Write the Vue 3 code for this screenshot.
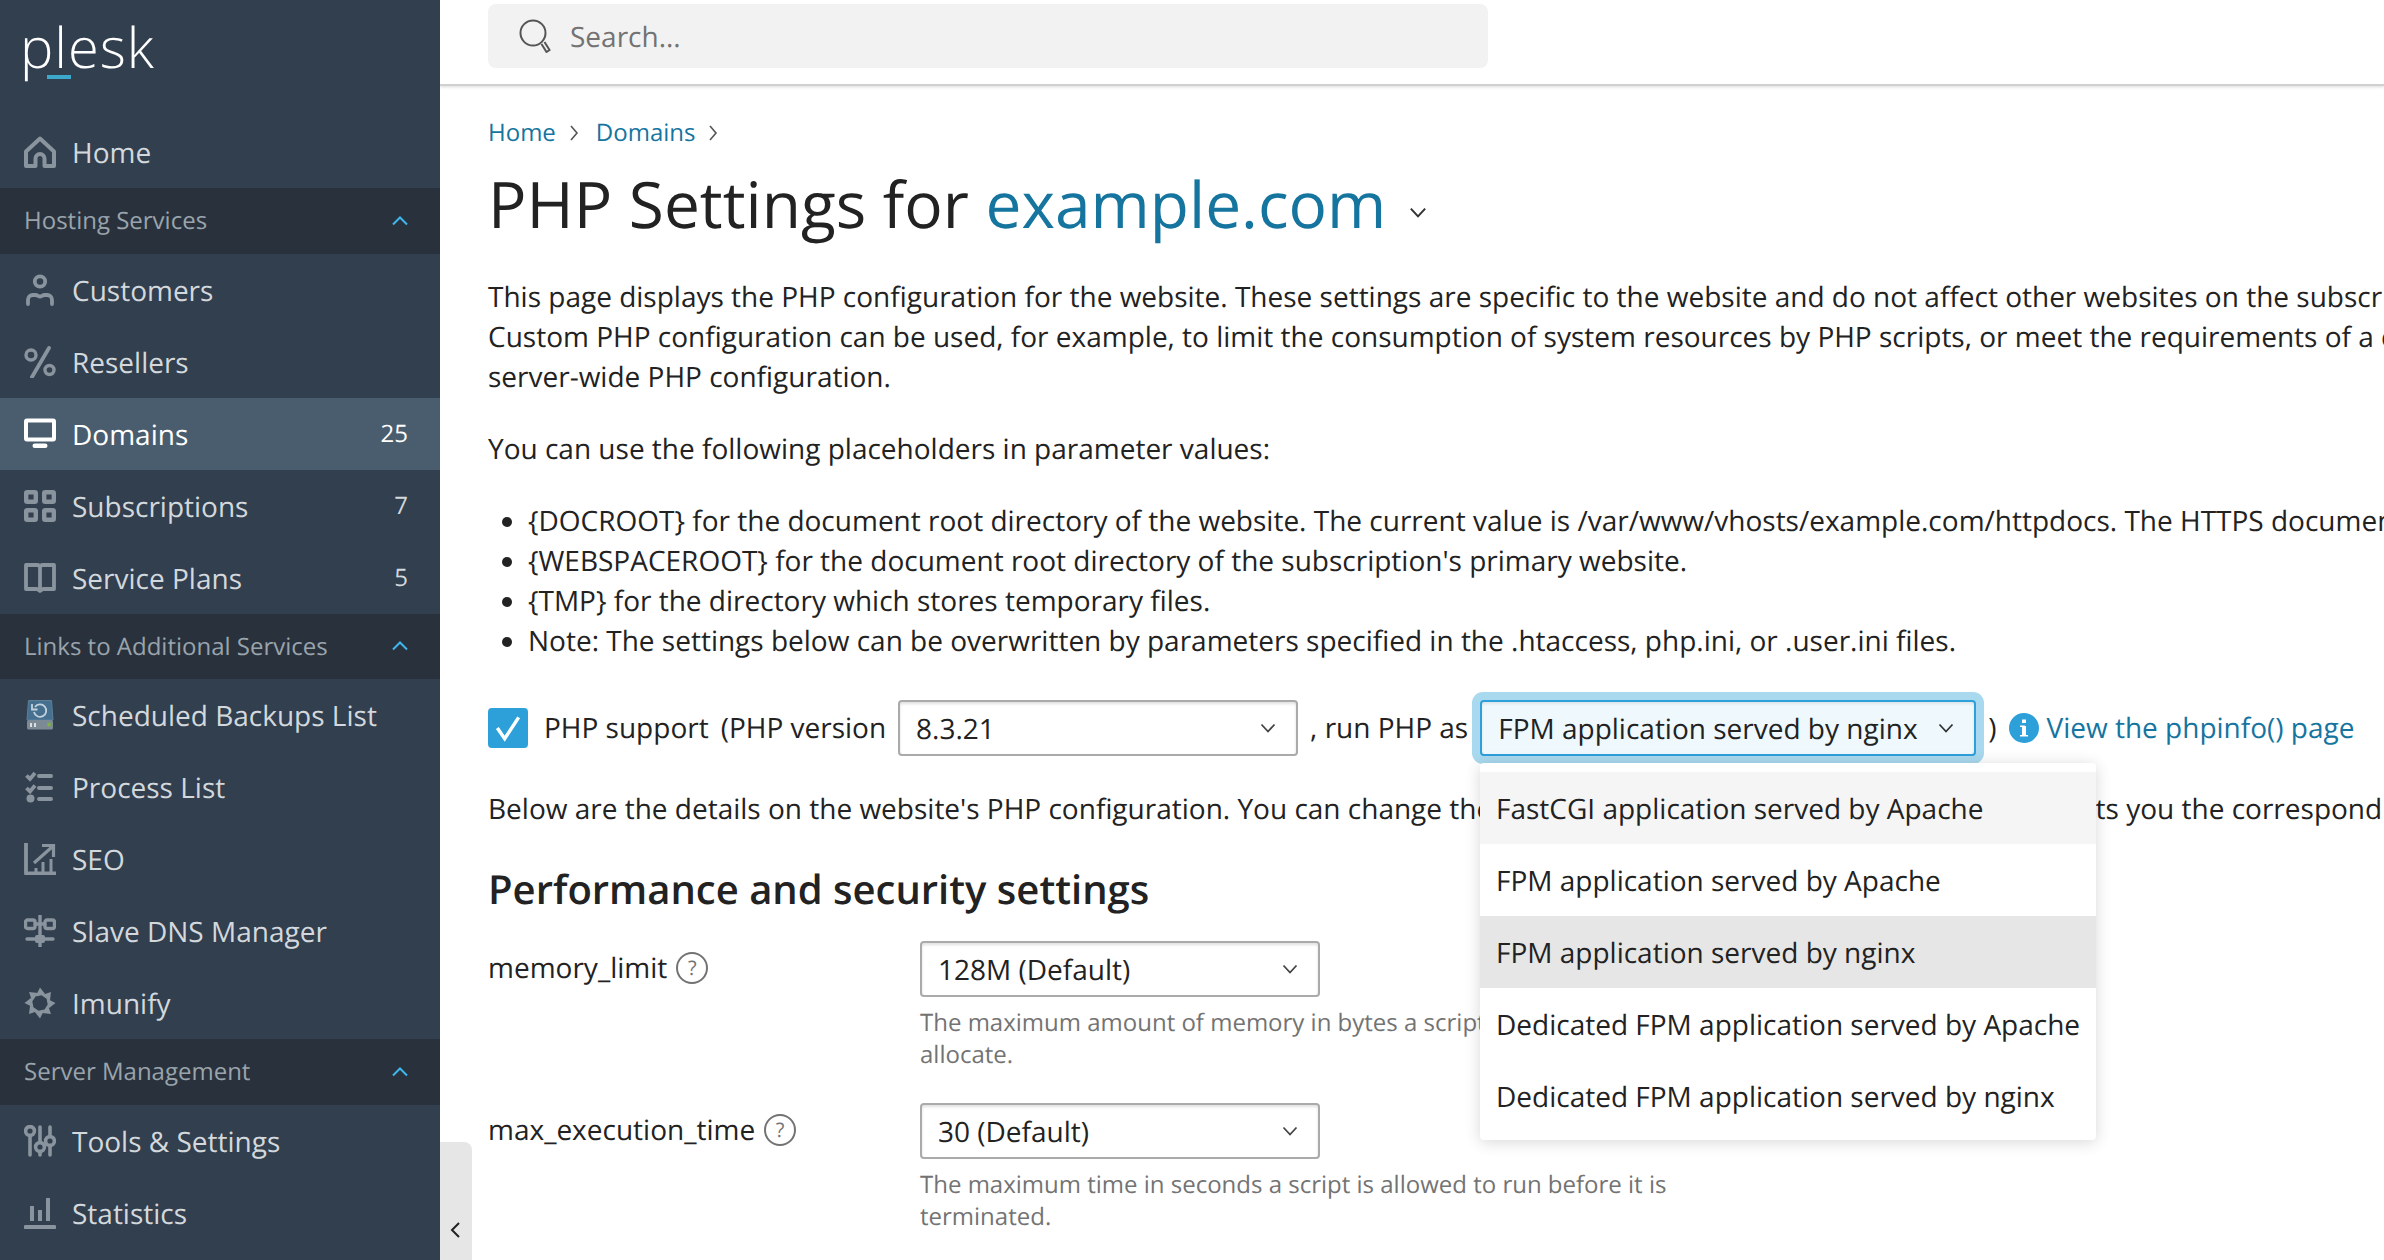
<script setup>
const blades = [0, 45, 90, 135, 180, 225, 270, 315]
  .map((deg) => `<path transform="rotate(${deg} 16 16)" d="M16 .5 21.500 7.500 11.500 9.500Z"/>`)
  .join('')

const icons = {
  home: '<path d="M16 2.500 30 15.500V30H20.500V22.500a4.500 4.500 0 0 0-9 0V30H2V15.500Z" fill="none" stroke="currentColor" stroke-width="4" stroke-linejoin="round"/>',
  user: '<circle cx="16" cy="7.500" r="5.200" fill="none" stroke="currentColor" stroke-width="3.800"/><path d="M4 30v-4c0-3 2-5 5-5h2.500c2 0 3 1.500 4.500 1.500S18.500 21 20.500 21H23c3 0 5 2 5 5v4" fill="none" stroke="currentColor" stroke-width="3.800" stroke-linecap="round"/>',
  percent: '<circle cx="7" cy="9" r="5" fill="none" stroke="currentColor" stroke-width="3.400"/><circle cx="25.500" cy="24" r="4.500" fill="none" stroke="currentColor" stroke-width="3.400"/><path d="M25 2 8 31" stroke="currentColor" stroke-width="3.800" stroke-linecap="round"/>',
  monitor: '<rect x="2" y="2.500" width="28" height="19" rx="1" fill="none" stroke="currentColor" stroke-width="4"/><rect x="8.500" y="25.500" width="15" height="4.500" rx="2.200" fill="currentColor"/>',
  grid: '<g fill="none" stroke="currentColor" stroke-width="4.400"><rect x="2.200" y="2.200" width="9.600" height="9.600" rx="1"/><rect x="20.200" y="2.200" width="9.600" height="9.600" rx="1"/><rect x="2.200" y="20.200" width="9.600" height="9.600" rx="1"/><rect x="20.200" y="20.200" width="9.600" height="9.600" rx="1"/></g>',
  book: '<path d="M2 3h11c1.500 0 3 1 3 1s1.500-1 3-1h11v24H19l-3 2-3-2H2Z" fill="none" stroke="currentColor" stroke-width="3.800" stroke-linejoin="round"/><path d="M16 4v25" stroke="currentColor" stroke-width="3.800"/>',
  backup: '<path d="M4.500 1.500h23L29 21H3Z" fill="#46708f" stroke="#5d7f98"/><rect x="3" y="21" width="26" height="9.500" rx="1.500" fill="#7c8a95"/><path d="M10 13a6.200 6.200 0 1 0 1-5" fill="none" stroke="#c3d3de" stroke-width="1.800"/><path d="M8 5v5.500h5.500" fill="none" stroke="#c3d3de" stroke-width="1.800"/><rect x="6" y="24" width="2" height="4" fill="#ddd"/><rect x="10" y="24" width="2" height="4" fill="#ddd"/><circle cx="25" cy="25.500" r="2" fill="#7cb342"/>',
  tasks: '<path d="M2.500 4.500 6 8l5-6M2.500 17 6 20.500l5-6" fill="none" stroke="currentColor" stroke-width="3.800"/><circle cx="6.500" cy="27.500" r="4" fill="currentColor"/><path d="M15 5h12M15 17h12M15 28h12" stroke="currentColor" stroke-width="4" stroke-linecap="round"/>',
  seo: '<path d="M2 0v30.500h30" fill="none" stroke="currentColor" stroke-width="3.800" stroke-linejoin="round"/><path d="M10 20 28 4M18 2.500h11.500V14" fill="none" stroke="currentColor" stroke-width="3.200"/><path d="M12 30v-5M19 30V19M27 30V16" stroke="currentColor" stroke-width="3"/>',
  dns: '<path d="M16 0v32M0 9h32M3 24h26" stroke="currentColor" stroke-width="3.400" stroke-linecap="round"/><rect x="1.500" y="5" width="9.500" height="8.500" rx="2" fill="#323f4f" stroke="currentColor" stroke-width="3.400"/><rect x="21" y="5" width="9.500" height="8.500" rx="2" fill="#323f4f" stroke="currentColor" stroke-width="3.400"/><rect x="11" y="20" width="10" height="8" rx="2" fill="currentColor"/>',
  imunify: `<g fill="currentColor">${blades}</g>`,
  sliders: '<g fill="none" stroke="currentColor" stroke-width="3.600" stroke-linecap="round"><path d="M6 11v19M16 2v14M16 28v2M26 2v8M26 22v8"/><circle cx="6" cy="6" r="4.400"/><circle cx="16" cy="22" r="4.400"/><circle cx="26" cy="16" r="4.400"/></g>',
  stats: '<path d="M8 9v15M16 13v11M24 1v23" stroke="currentColor" stroke-width="4"/><path d="M1.500 30h29" stroke="currentColor" stroke-width="4" stroke-linecap="round"/>',
}

const nav = [
  { type: 'item', label: 'Home', icon: 'home' },
  { type: 'section', label: 'Hosting Services' },
  { type: 'item', label: 'Customers', icon: 'user' },
  { type: 'item', label: 'Resellers', icon: 'percent' },
  { type: 'item', label: 'Domains', icon: 'monitor', count: 25, active: true },
  { type: 'item', label: 'Subscriptions', icon: 'grid', count: 7 },
  { type: 'item', label: 'Service Plans', icon: 'book', count: 5 },
  { type: 'section', label: 'Links to Additional Services' },
  { type: 'item', label: 'Scheduled Backups List', icon: 'backup' },
  { type: 'item', label: 'Process List', icon: 'tasks' },
  { type: 'item', label: 'SEO', icon: 'seo' },
  { type: 'item', label: 'Slave DNS Manager', icon: 'dns' },
  { type: 'item', label: 'Imunify', icon: 'imunify' },
  { type: 'section', label: 'Server Management' },
  { type: 'item', label: 'Tools & Settings', icon: 'sliders' },
  { type: 'item', label: 'Statistics', icon: 'stats' },
]

const placeholders = [
  '{DOCROOT} for the document root directory of the website. The current value is /var/www/vhosts/example.com/httpdocs. The HTTPS document root is the same.',
  "{WEBSPACEROOT} for the document root directory of the subscription's primary website.",
  '{TMP} for the directory which stores temporary files.',
  'Note: The settings below can be overwritten by parameters specified in the .htaccess, php.ini, or .user.ini files.',
]

const handlers = [
  { label: 'FastCGI application served by Apache', cls: 'hover' },
  { label: 'FPM application served by Apache' },
  { label: 'FPM application served by nginx', cls: 'selected' },
  { label: 'Dedicated FPM application served by Apache' },
  { label: 'Dedicated FPM application served by nginx' },
]

const settings = [
  { name: 'memory_limit', value: '128M (Default)', hint: 'The maximum amount of memory in bytes a script is allowed to allocate.' },
  { name: 'max_execution_time', value: '30 (Default)', hint: 'The maximum time in seconds a script is allowed to run before it is terminated.' },
]
</script>

<template>
  <div class="app">
    <aside class="sidebar">
      <div class="logo">plesk<span class="logo-bar"></span></div>
      <nav class="nav">
        <template v-for="entry in nav" :key="entry.label">
          <div v-if="entry.type === 'section'" class="section">
            <span class="section-label">{{ entry.label }}</span>
            <svg class="section-chev" viewBox="0 0 16 10"><path d="M1 8.500 8 1.500l7 7" fill="none" stroke="currentColor" stroke-width="2"/></svg>
          </div>
          <div v-else class="item" :class="{ active: entry.active }">
            <svg class="nav-icon" viewBox="0 0 32 32" v-html="icons[entry.icon]"></svg>
            <span class="item-label">{{ entry.label }}</span>
            <span v-if="entry.count" class="count">{{ entry.count }}</span>
          </div>
        </template>
      </nav>
    </aside>

    <main class="main">
      <header class="topbar">
        <div class="search">
          <svg class="search-icon" viewBox="0 0 34 34"><circle cx="14" cy="14" r="12.500" fill="none" stroke="#555" stroke-width="2"/><path d="m22.500 25 5 8 3-2-5-8" fill="none" stroke="#555" stroke-width="2"/></svg>
          <span class="search-text">Search...</span>
        </div>
      </header>

      <div class="collapse">
        <svg class="collapse-chev" viewBox="0 0 12 18"><path d="M10 2 3 9l7 7" fill="none" stroke="#222" stroke-width="2"/></svg>
      </div>

      <section class="content">
        <div class="crumbs">
          <a>Home</a>
          <svg class="crumb-sep" viewBox="0 0 10 18"><path d="m2 2 6 7-6 7" fill="none" stroke="#555" stroke-width="1.600"/></svg>
          <a>Domains</a>
          <svg class="crumb-sep" viewBox="0 0 10 18"><path d="m2 2 6 7-6 7" fill="none" stroke="#555" stroke-width="1.600"/></svg>
        </div>

        <h1 class="title">
          PHP Settings for <a>example.com</a>
          <svg class="title-chev" viewBox="0 0 16 10"><path d="m1.500 1.500 6.500 7 6.500-7" fill="none" stroke="#333" stroke-width="1.800"/></svg>
        </h1>

        <p class="para">
          This page displays the PHP configuration for the website. These settings are specific to the website and do not affect other websites on the subscription.<br>
          Custom PHP configuration can be used, for example, to limit the consumption of system resources by PHP scripts, or meet the requirements of a certain application. The settings override the<br>
          server-wide PHP configuration.
        </p>
        <p class="para">You can use the following placeholders in parameter values:</p>
        <ul class="list">
          <li v-for="line in placeholders" :key="line">{{ line }}</li>
        </ul>

        <div class="support-row">
          <span class="checkbox">
            <svg viewBox="0 0 24 24"><path d="M4 12 9.500 20 20 4" fill="none" stroke="#fff" stroke-width="2.600"/></svg>
          </span>
          <span class="support-label">PHP support</span>
          <span class="version-label">(PHP version</span>
          <div class="select version-select">
            <span class="select-text">8.3.21</span>
            <svg class="chev" viewBox="0 0 16 10"><path d="m1.500 1.500 6.500 7 6.500-7" fill="none" stroke="#444" stroke-width="1.800"/></svg>
          </div>
          <span class="run-label">, run PHP as</span>
          <div class="select handler-select">
            <span class="select-text">FPM application served by nginx</span>
            <svg class="chev" viewBox="0 0 16 10"><path d="m1.500 1.500 6.500 7 6.500-7" fill="none" stroke="#333" stroke-width="1.800"/></svg>
          </div>
          <span class="paren">)</span>
          <svg class="info" viewBox="0 0 30 30"><circle cx="15" cy="15" r="15" fill="#2d9fd9"/><path d="M13 6.500h4v3.500h-4zM13 13h4v10h-4z" fill="#fff"/><path d="M11 12.500h5v1.500h-5zM11 22h8v1.500h-8z" fill="#fff"/></svg>
          <a class="phpinfo">View the phpinfo() page</a>

          <div class="menu">
            <div v-for="opt in handlers" :key="opt.label" class="menu-item" :class="opt.cls">{{ opt.label }}</div>
          </div>
        </div>

        <p class="below">Below are the details on the website's PHP configuration. You can change them if the hosting plan of your subscription grants you the corresponding permissions.</p>

        <h2 class="subtitle">Performance and security settings</h2>

        <div v-for="s in settings" :key="s.name" class="setting">
          <div class="setting-label">
            <span>{{ s.name }}</span>
            <span class="help">?</span>
          </div>
          <div class="setting-field">
            <div class="select value-select">
              <span class="select-text">{{ s.value }}</span>
              <svg class="chev" viewBox="0 0 16 10"><path d="m1.500 1.500 6.500 7 6.500-7" fill="none" stroke="#444" stroke-width="1.800"/></svg>
            </div>
            <div class="hint">{{ s.hint }}</div>
          </div>
        </div>
      </section>
    </main>
  </div>
</template>

<style>
html, body { margin: 0; height: 100%; overflow: hidden; background: #fff; }
</style>

<style scoped>
.app {
  display: flex;
  width: 2384px;
  height: 1260px;
  overflow: hidden;
  font-family: "Open Sans", "Noto Sans", sans-serif;
  font-size: 28px;
  line-height: 40px;
  color: #222;
  text-rendering: geometricPrecision;
}
a { color: #15759f; }

.sidebar { flex: 0 0 440px; background: #323f4f; overflow: hidden; }
.logo {
  position: relative;
  height: 116px;
  box-sizing: border-box;
  padding: 14px 0 0 20px;
  font-size: 56px;
  line-height: 66px;
  font-weight: 300;
  color: #fff;
  letter-spacing: 1px;
}
.logo-bar { position: absolute; left: 47px; top: 75px; width: 24px; height: 4px; background: #3ba8cc; }
.section {
  height: 65.6px;
  display: flex;
  align-items: center;
  justify-content: space-between;
  padding: 0 32px 0 24px;
  background: #29323c;
  color: #9aa4ac;
  font-size: 24px;
}
.section-label { padding-top: 1px; }
.section-chev { width: 16px; height: 10px; color: #3fb6ee; }
.item {
  height: 72px;
  display: flex;
  align-items: center;
  padding: 0 32px 0 24px;
  color: #d3d8dc;
}
.item.active { background: #4a5d6e; color: #fff; }
.nav-icon { flex: 0 0 32px; width: 32px; height: 32px; margin-right: 16px; color: #8a949e; }
.item.active .nav-icon { color: #fff; }
.item-label { flex: 1; padding-top: 2px; }
.count { font-size: 24px; }

.main { flex: 1; position: relative; min-width: 0; overflow: hidden; }
.topbar {
  height: 86px;
  box-sizing: border-box;
  padding: 4px 48px 0;
  border-bottom: 2px solid #d0d0d0;
  box-shadow: 0 1px 3px rgba(0,0,0,.15);
}
.search {
  width: 1000px;
  height: 64px;
  box-sizing: border-box;
  display: flex;
  align-items: center;
  padding-left: 31px;
  background: #f2f2f2;
  border-radius: 8px;
  color: #737373;
}
.search-icon { width: 34px; height: 34px; margin-right: 17px; }
.search-text { padding-top: 2px; }
.collapse {
  position: absolute;
  left: 0;
  top: 1142px;
  width: 32px;
  height: 118px;
  background: #e6e6e6;
  border-top-right-radius: 8px;
}
.collapse-chev { position: absolute; left: 9px; top: 79px; width: 12px; height: 18px; }

.content { padding: 31px 48px 0; }
.crumbs { display: flex; align-items: center; height: 32px; font-size: 24px; line-height: 32px; }
.crumb-sep { width: 10px; height: 18px; margin: 0 17px 0 13px; }
.title { margin: 15px 0 0; font-size: 64px; line-height: 80px; font-weight: 400; white-space: nowrap; }
.title-chev { width: 18px; height: 11px; margin-left: 23px; vertical-align: 10px; }
.para { margin: 0 0 32px; white-space: nowrap; }
.title + .para { margin-top: 33px; }
.list { margin: 0 0 39px; padding: 0 0 0 40px; white-space: nowrap; }
.support-row { position: relative; display: flex; align-items: center; height: 56px; white-space: nowrap; }
.support-row > * { flex: none; }
.checkbox {
  width: 40px;
  height: 40px;
  margin-right: 16px;
  background: #2d9fd9;
  border-radius: 4px;
  display: flex;
  align-items: center;
  justify-content: center;
}
.checkbox svg { width: 32px; height: 32px; }
.support-label { margin-right: 12px; }
.version-label { margin-right: 12px; }
.select {
  box-sizing: border-box;
  height: 56px;
  display: flex;
  align-items: center;
  justify-content: space-between;
  padding: 0 20px 0 16px;
  border: 2px solid #aaa;
  border-radius: 4px;
  background: #fff;
  box-shadow: inset 0 2px 3px rgba(0,0,0,.12);
}
.select-text { padding-top: 2px; }
.chev { flex: 0 0 16px; width: 16px; height: 10px; }
.version-select { width: 400px; }
.run-label { margin: 0 12px 0 12px; }
.handler-select {
  width: 496px;
  border-color: #2d9fd9;
  background: #eef8fd;
  box-shadow: 0 0 0 8px #a9d9ef, inset 0 2px 3px rgba(0,0,0,.08);
}
.paren { margin-left: 12px; }
.info { width: 30px; height: 30px; margin: 0 7px 0 13px; }

.menu {
  position: absolute;
  left: 992px;
  top: 63px;
  width: 616px;
  box-sizing: border-box;
  padding: 9px 0 8px;
  background: #fff;
  border-radius: 4px;
  box-shadow: 0 2px 16px rgba(0,0,0,.16);
  z-index: 2;
}
.menu-item { height: 72px; box-sizing: border-box; padding: 2px 16px 0; display: flex; align-items: center; }
.menu-item.hover { background: #f5f5f5; }
.menu-item.selected { background: #e6e6e6; }

.below { margin: 33px 0 0; white-space: nowrap; }
.subtitle { margin: 32px 0 24px; font-size: 40px; line-height: 56px; font-weight: 600; }
.setting { display: flex; margin-bottom: 32px; }
.setting-label { flex: 0 0 432px; display: flex; align-items: flex-start; gap: 9px; padding-top: 7px; height: 40px; }
.help {
  box-sizing: border-box;
  width: 32px;
  height: 32px;
  margin-top: 4px;
  border: 2px solid #737373;
  border-radius: 50%;
  font-size: 20px;
  line-height: 28px;
  text-align: center;
  color: #737373;
}
.value-select { width: 400px; padding: 0 20px 0 16px; }
.hint { width: 800px; margin-top: 10px; font-size: 24px; line-height: 32px; color: #737373; }
</style>
